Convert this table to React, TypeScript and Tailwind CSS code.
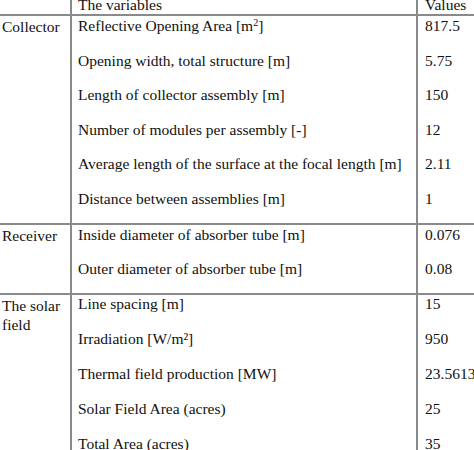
const groups = [
  {
    label: "Collector",
    rowH: "h-[34.5px] pt-[1px]",
    rows: [
      { name: <>Reflective Opening Area [m<sup className="text-[10px]">2</sup>]</>, value: "817.5" },
      { name: "Opening width, total structure [m]", value: "5.75" },
      { name: "Length of collector assembly [m]", value: "150" },
      { name: "Number of modules per assembly [-]", value: "12" },
      { name: "Average length of the surface at the focal length [m]", value: "2.11" },
      { name: "Distance between assemblies [m]", value: "1" },
    ],
  },
  {
    label: "Receiver",
    rowH: "h-[34px] pt-[1px]",
    rows: [
      { name: "Inside diameter of absorber tube [m]", value: "0.076" },
      { name: "Outer diameter of absorber tube [m]", value: "0.08" },
    ],
  },
  {
    label: "The solar field",
    rowH: "h-[35px]",
    rows: [
      { name: "Line spacing [m]", value: "15" },
      { name: "Irradiation [W/m²]", value: "950" },
      { name: "Thermal field production [MW]", value: "23.56136" },
      { name: "Solar Field Area (acres)", value: "25" },
      { name: "Total Area (acres)", value: "35" },
    ],
  },
];

export default function App() {
  return (
    <div className="w-[474px] h-[450px] overflow-hidden bg-white text-[#111] text-[15.5px] leading-[18px] font-['Liberation_Serif',serif]">
      {/* header */}
      <div className="flex h-[14px]">
        <div className="w-[72px] shrink-0 border-r-2 border-[#8a8a8a]" />
        <div className="w-[346px] shrink-0 border-r-2 border-[#8a8a8a] pl-[6px] -mt-[4px]">The variables</div>
        <div className="flex-1 pl-[7px] -mt-[4px] whitespace-nowrap">Values</div>
      </div>

      {groups.map((g) => (
        <div key={g.label} className="flex border-t-2 border-[#8a8a8a]">
          <div className="w-[72px] shrink-0 border-r-2 border-[#8a8a8a] pl-[2px] pr-[4px] pt-[1px] leading-[19px]">
            {g.label}
          </div>
          <div className="w-[346px] shrink-0 border-r-2 border-[#8a8a8a] pl-[6px]">
            {g.rows.map((r, i) => (
              <div key={i} className={`${g.rowH} whitespace-nowrap`}>
                {r.name}
              </div>
            ))}
          </div>
          <div className="flex-1 pl-[7px] overflow-hidden">
            {g.rows.map((r, i) => (
              <div key={i} className={`${g.rowH} whitespace-nowrap`}>
                {r.value}
              </div>
            ))}
          </div>
        </div>
      ))}
    </div>
  );
}
